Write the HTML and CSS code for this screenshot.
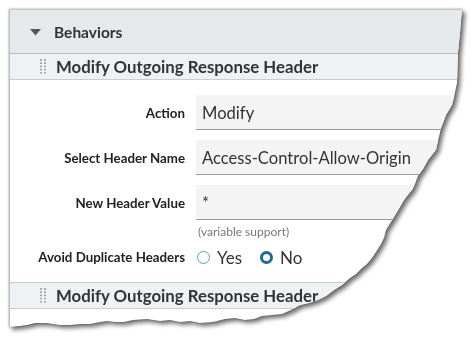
FILE: index.html
```html
<!DOCTYPE html>
<html lang="en">
  <head>
    <meta charset="UTF-8" />
    <meta name="viewport" content="width=device-width, initial-scale=1.0" />
    <title>Behaviors</title>
    <link rel="stylesheet" href="styles.css">
  </head>
  <body>
    <div class="page">
      <div class="torn">
        <div class="sheet">
          <div class="panel-head">
            <svg class="caret" width="11" height="7" viewBox="0 0 11 7"><polygon points="0,0 11,0 5.5,6.5" fill="#555"/></svg>
            <span>Behaviors</span>
          </div>

          <div class="behavior-head">
            <svg class="handle" width="6" height="15" viewBox="0 0 6 15">
              <circle cx="1" cy="1" r="0.9"/><circle cx="5" cy="1" r="0.9"/>
              <circle cx="1" cy="4.2" r="0.9"/><circle cx="5" cy="4.2" r="0.9"/>
              <circle cx="1" cy="7.4" r="0.9"/><circle cx="5" cy="7.4" r="0.9"/>
              <circle cx="1" cy="10.6" r="0.9"/><circle cx="5" cy="10.6" r="0.9"/>
              <circle cx="1" cy="13.8" r="0.9"/><circle cx="5" cy="13.8" r="0.9"/>
            </svg>
            <span>Modify Outgoing Response Header</span>
          </div>

          <div class="form">
            <div class="field">
              <label class="label">Action</label>
              <div class="input">Modify</div>
            </div>
            <div class="field">
              <label class="label">Select Header Name</label>
              <div class="input">Access-Control-Allow-Origin</div>
            </div>
            <div class="field">
              <label class="label">New Header Value</label>
              <div class="input">*</div>
            </div>
            <div class="help">(variable support)</div>
            <div class="field radios">
              <label class="label">Avoid Duplicate Headers</label>
              <div class="options">
                <span class="option"><span class="radio"></span>Yes</span>
                <span class="option"><span class="radio checked"></span>No</span>
              </div>
            </div>
          </div>

          <div class="behavior-head second">
            <svg class="handle" width="6" height="15" viewBox="0 0 6 15">
              <circle cx="1" cy="1" r="0.9"/><circle cx="5" cy="1" r="0.9"/>
              <circle cx="1" cy="4.2" r="0.9"/><circle cx="5" cy="4.2" r="0.9"/>
              <circle cx="1" cy="7.4" r="0.9"/><circle cx="5" cy="7.4" r="0.9"/>
              <circle cx="1" cy="10.6" r="0.9"/><circle cx="5" cy="10.6" r="0.9"/>
              <circle cx="1" cy="13.8" r="0.9"/><circle cx="5" cy="13.8" r="0.9"/>
            </svg>
            <span>Modify Outgoing Response Header</span>
          </div>
          <div class="blank"></div>
        </div>
      </div>
    </div>
  </body>
</html>
```

FILE: styles.css
```css
body {
  margin: 0;
  background: #fff;
  font-family: Lato, "Noto Sans", sans-serif;
  color: #333;
}
.page {
  padding: 9px 0 0 9px;
  height: 331px;
  overflow: hidden;
}
.torn {
  filter: drop-shadow(0 0 1px rgba(0, 0, 0, 0.35)) drop-shadow(3px 3px 2px rgba(0, 0, 0, 0.55));
}
.sheet {
  width: 464px;
  height: 322px;
  background: #fff;
  border-left: 1px solid #bdbdbd;
  border-top: 1px solid #c4c4c4;
  box-sizing: border-box;
  overflow: hidden;
  clip-path: polygon(
    0 0, 453px 0, 451px 24px, 449px 44px, 448px 74px, 445px 88px, 443px 96px,
    437px 106px, 434px 114px, 432px 119px, 429px 132px, 427px 141px, 423px 146px,
    419px 151px, 414px 160px, 409px 167px, 406px 175px, 403px 181px, 398px 187px,
    395px 191px, 391px 198px, 388px 203px, 382px 213px, 377px 221px, 375px 229px,
    372px 235px, 367px 243px, 363px 249px, 358px 255px, 353px 259px, 347px 265px,
    341px 269px, 333px 276px, 325px 281px, 317px 287px, 309px 291px, 300px 294px,
    291px 296px, 282px 301px, 273px 305px, 263px 306px, 253px 307px, 245px 310px,
    236px 311px, 226px 309px, 216px 310px, 204px 313px, 191px 314px, 181px 312px,
    171px 313px, 161px 311px, 151px 312px, 138px 310px, 124px 311px, 115px 313px,
    106px 313px, 98px 312px, 91px 313px, 81px 315px, 71px 315px, 61px 316px,
    51px 316px, 38px 314px, 26px 314px, 18px 316px, 11px 317px, 0 318px
  );
}
.panel-head {
  display: flex;
  align-items: center;
  gap: 13px;
  height: 43px;
  padding-left: 20px;
  background: #e6e9e9;
  border-bottom: 1px solid #b9bdbd;
  font-size: 15.5px;
  font-weight: bold;
  color: #333;
}
.caret {
  margin-top: 1px;
}
.behavior-head {
  display: flex;
  align-items: center;
  gap: 10px;
  height: 25px;
  padding-left: 30px;
  background: #eef2f5;
  border-bottom: 1px solid #c9cdcf;
  font-size: 16.8px;
  font-weight: bold;
  color: #333;
}
.behavior-head.second {
  border-top: 1px solid #c9cdcf;
}
.handle {
  fill: #8a8a8a;
}
.form {
  padding: 15px 0 14px;
}
.field {
  display: flex;
  align-items: center;
  margin-bottom: 10px;
}
.label {
  width: 175px;
  margin-right: 11px;
  flex-shrink: 0;
  text-align: right;
  font-size: 13.3px;
  font-weight: bold;
  color: #222;
}
.input {
  flex: 1;
  height: 34px;
  line-height: 36px;
  padding-left: 6px;
  background: #f4f4f4;
  border-bottom: 1px solid #9a9a9a;
  font-size: 16.6px;
  color: #333;
  white-space: nowrap;
}
.help {
  margin: -6px 0 0 188px;
  height: 14px;
  line-height: 15px;
  font-size: 12px;
  color: #777;
}
.field.radios {
  margin: 8px 0 0;
  height: 22px;
}
.options {
  display: flex;
  gap: 17px;
  font-size: 17px;
  color: #333;
}
.option {
  display: flex;
  align-items: center;
  gap: 7px;
}
.radio {
  width: 11px;
  height: 11px;
  border: 1.5px solid #5a9fc6;
  border-radius: 50%;
  margin-left: 1px;
  margin-top: 1px;
}
.radio.checked {
  width: 7px;
  height: 7px;
  border: 3.7px solid #1b6a95;
}
.blank {
  height: 20px;
}
```
